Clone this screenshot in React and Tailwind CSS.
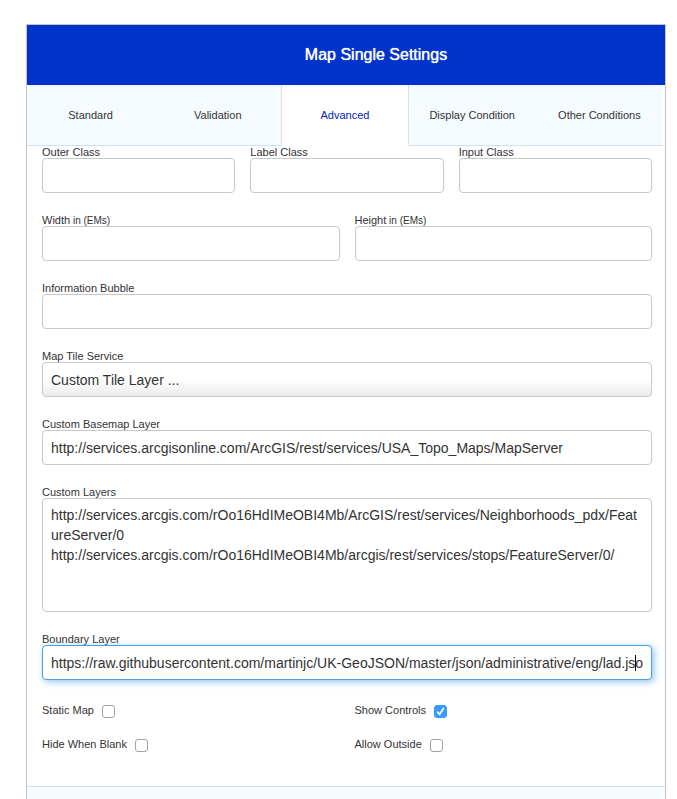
import React, { useState } from "react";

const tabs = [
  "Standard",
  "Validation",
  "Advanced",
  "Display Condition",
  "Other Conditions",
];

const inputClass =
  "block w-full h-[35px] px-2 rounded border border-[#c8c8c8] bg-white text-sm text-[#333333] outline-none";

const Field = ({ id, label, unit, children }) => {
  return (
    <div className="min-w-0">
      <label htmlFor={id} className="block h-3 text-[11px] leading-3">
        {label}
        {unit && <span className="text-[10px]"> {unit}</span>}
      </label>
      {children}
    </div>
  );
};

const TextField = ({ id, label, unit, value = "" }) => {
  return (
    <Field id={id} label={label} unit={unit}>
      <input id={id} type="text" defaultValue={value} className={inputClass} />
    </Field>
  );
};

const CheckField = ({ id, label, checked = false }) => {
  const [on, setOn] = useState(checked);

  return (
    <div className="flex items-start space-x-2 h-[13px]">
      <label htmlFor={id} className="text-[11px] leading-none">
        {label}
      </label>
      <span className="relative block w-[13px] h-[13px]">
        <input
          id={id}
          type="checkbox"
          checked={on}
          onChange={() => setOn(!on)}
          className="block w-[13px] h-[13px] appearance-none rounded-[3px] border border-[#a3a3a3] bg-white checked:border-[#3b99fc] checked:bg-[#3b99fc]"
        />
        {on && (
          <svg
            viewBox="0 0 13 13"
            className="absolute inset-0 w-[13px] h-[13px] pointer-events-none"
            fill="none"
            stroke="white"
            strokeWidth="1.7"
            strokeLinecap="round"
            strokeLinejoin="round"
          >
            <path d="M3.6 7.1 L5.6 9.4 L9.4 3.5" />
          </svg>
        )}
      </span>
    </div>
  );
};

const App = () => {
  const [activeTab, setActiveTab] = useState("Advanced");

  return (
    <div className="min-h-screen flex flex-col pt-6 pl-[26px] pr-[11px] bg-white font-['Liberation_Sans',Arial,sans-serif] text-[#333333]">
      <div className="grow flex flex-col border border-b-0 border-[#c4c4c4]">
        <div className="h-[60px] pl-[60px] flex items-center justify-center bg-[#0033cc]">
          <h1 className="text-base font-medium text-white [text-shadow:0_0_1px_white]">
            Map Single Settings
          </h1>
        </div>

        <div className="grid grid-cols-5 mr-[2px]">
          {tabs.map((tab) => {
            return (
              <button
                key={tab}
                type="button"
                onClick={() => setActiveTab(tab)}
                className={
                  tab === activeTab
                    ? "h-[61px] text-[11px] border-x border-b border-x-[#cfe3ec] border-b-white bg-white text-[#0022bb]"
                    : "h-[61px] text-[11px] border-b border-[#cfe3ec] bg-[#f5fbff]"
                }
              >
                {tab}
              </button>
            );
          })}
        </div>

        <form className="flex flex-col gap-[21px] pl-[15px] pr-[13px] pb-[34px]">
          <div className="grid grid-cols-3 gap-[15px]">
            <TextField id="outerClass" label="Outer Class" />
            <TextField id="labelClass" label="Label Class" />
            <TextField id="inputClass" label="Input Class" />
          </div>

          <div className="grid grid-cols-2 gap-[15px]">
            <TextField id="width" label="Width" unit="in (EMs)" />
            <TextField id="height" label="Height" unit="in (EMs)" />
          </div>

          <TextField id="bubble" label="Information Bubble" />

          <Field id="tileService" label="Map Tile Service">
            <select
              id="tileService"
              className="block w-full h-[35px] px-2 appearance-none rounded border border-[#c8c8c8] bg-linear-to-b from-white from-50% to-[#ebebeb] text-sm outline-none"
            >
              <option>Custom Tile Layer ...</option>
            </select>
          </Field>

          <TextField
            id="basemap"
            label="Custom Basemap Layer"
            value="http://services.arcgisonline.com/ArcGIS/rest/services/USA_Topo_Maps/MapServer"
          />

          <Field id="customLayers" label="Custom Layers">
            <textarea
              id="customLayers"
              className="block w-full h-[114px] px-2 py-[6px] resize-none rounded border border-[#c8c8c8] text-sm leading-5 break-all outline-none"
              defaultValue={
                "http://services.arcgis.com/rOo16HdIMeOBI4Mb/ArcGIS/rest/services/Neighborhoods_pdx/FeatureServer/0\nhttp://services.arcgis.com/rOo16HdIMeOBI4Mb/arcgis/rest/services/stops/FeatureServer/0/"
              }
            />
          </Field>

          <Field id="boundary" label="Boundary Layer">
            <div className="relative">
              <input
                id="boundary"
                type="text"
                defaultValue="https://raw.githubusercontent.com/martinjc/UK-GeoJSON/master/json/administrative/eng/lad.jso"
                className="block w-full h-[35px] px-2 rounded border border-[#4a9fe8] bg-white text-sm outline-none shadow-[2px_2px_7px_rgba(74,159,232,0.6)]"
              />
              {/* text cursor */}
              <span className="absolute right-4 top-[10px] w-px h-4 bg-black" />
            </div>
          </Field>

          <div className="grid grid-cols-2 gap-x-[15px] gap-y-[21px] pt-1">
            <CheckField id="staticMap" label="Static Map" />
            <CheckField id="showControls" label="Show Controls" checked />
            <CheckField id="hideBlank" label="Hide When Blank" />
            <CheckField id="allowOutside" label="Allow Outside" />
          </div>
        </form>

        <div className="grow min-h-3 border-t border-[#cfe3ec] bg-[#f5fbff]" />
      </div>
    </div>
  );
};

export default App;
